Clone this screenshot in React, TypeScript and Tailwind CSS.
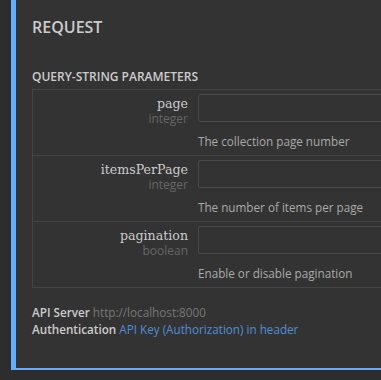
import React from 'react';

const params = [
  { name: 'page', type: 'integer', description: 'The collection page number' },
  { name: 'itemsPerPage', type: 'integer', description: 'The number of items per page' },
  { name: 'pagination', type: 'boolean', description: 'Enable or disable pagination' },
];

const App = () => {
  return (
    <div className="h-[380px] w-[381px] overflow-hidden bg-[#2d2d2d] font-['Open_Sans',sans-serif]">
      <div className="ml-[11px] h-[370px] w-[420px] border-l-[5px] border-b-2 border-[#61affe] bg-[#333333] pl-4 pt-[16px]">
        <h2 className="text-[16px] leading-[22px] font-semibold text-[#cccccc]">REQUEST</h2>

        <h3 className="mt-[31px] text-[12px] leading-[16px] font-semibold text-[#cccccc]">QUERY-STRING PARAMETERS</h3>

        {/* Parameters table */}
        <div className="mt-[4px] w-[400px] border border-[#444444]">
          {params.map((p, i) => (
            <div key={p.name} className={`flex ${i > 0 ? 'border-t border-[#444444]' : ''}`}>
              <div className="w-[165px] shrink-0 pr-[10px] pt-[5px] text-right">
                <div className="font-['DejaVu_Serif',serif] text-[12.6px] leading-[17px] text-[#cccccc]">{p.name}</div>
                <div className="text-[12px] leading-[14px] text-[#666666]">{p.type}</div>
              </div>
              <div className="flex-1 pt-[4px] pb-[5px]">
                <div className="h-[28px] w-full rounded-[2px] border border-[#4a4a4a] bg-[#333333]" />
                <div className="mt-[10px] text-[11.7px] leading-[18px] text-[#aaaaaa]">{p.description}</div>
              </div>
            </div>
          ))}
        </div>

        {/* Server info */}
        <div className="mt-[16px] text-[11.7px] leading-[17px]">
          <div>
            <span className="font-semibold text-[#cccccc]">API Server</span>{' '}
            <span className="text-[#777777]">http://localhost:8000</span>
          </div>
          <div>
            <span className="font-semibold text-[#cccccc]">Authentication</span>{' '}
            <span className="text-[#4f8fd6]">API Key (Authorization) in header</span>
          </div>
        </div>
      </div>
    </div>
  );
};

export default App;
